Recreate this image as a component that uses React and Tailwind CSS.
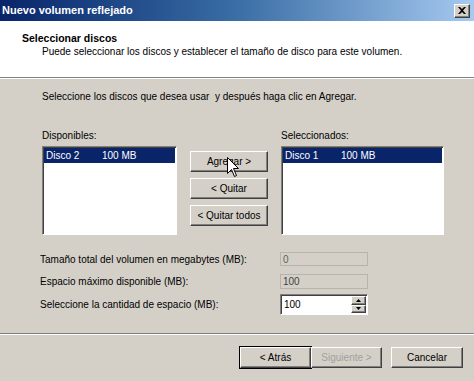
import React from "react";

const raised =
  "bg-[#d4d0c8] border border-t-white border-l-white border-r-[#404040] border-b-[#404040] shadow-[inset_-1px_-1px_0_#808080]";
const sunken =
  "border border-t-[#808080] border-l-[#808080] border-r-white border-b-white shadow-[inset_1px_1px_0_#404040]";

function Btn({ children, className = "", disabled = false, isDefault = false }) {
  return (
    <div
      className={`flex items-center justify-center ${raised} ${className} ${
        disabled ? "text-[#a0a0a0]" : "text-black"
      } ${isDefault ? "outline outline-1 outline-black" : ""}`}
    >
      {children}
    </div>
  );
}

function ListBox({ className = "", label }) {
  return (
    <div className={`bg-white h-[89px] p-[1px] ${sunken} ${className}`}>
      <div className="h-[15px] bg-[#0a246a] text-white flex items-center pl-[2px]">
        <span className="w-[56px]">{label}</span>
        <span>100 MB</span>
      </div>
    </div>
  );
}

export default function App() {
  return (
    <div
      className="relative w-[474px] h-[381px] overflow-hidden bg-[#d4d0c8] flex flex-col text-[10px] leading-[13px] text-black"
      style={{ fontFamily: '"Liberation Sans", Arial, sans-serif' }}
    >
      {/* Title bar */}
      <div className="h-[21px] shrink-0 flex items-center justify-between pl-[2px] pr-[4px] bg-linear-to-r from-[#0a246a] via-[#3a6ea5] to-[#a6caf0]">
        <span className="text-white font-bold text-[11px]">Nuevo volumen reflejado</span>
        <div className={`w-[16px] h-[14px] flex items-center justify-center ${raised}`}>
          <svg width="8" height="7" viewBox="0 0 8 7">
            <path d="M0 0h2l2 2 2-2h2L5 3.5 8 7H6L4 5 2 7H0l3-3.5z" fill="black" />
          </svg>
        </div>
      </div>

      {/* Header */}
      <div className="h-[56px] shrink-0 bg-white pl-[22px] pt-[11px]">
        <div className="font-bold text-[10.5px]">Seleccionar discos</div>
        <div className="pl-[20px] mt-[0px]">
          Puede seleccionar los discos y establecer el tamaño de disco para este volumen.
        </div>
      </div>
      <div className="h-[1px] shrink-0 bg-[#808080]" />
      <div className="h-[1px] shrink-0 bg-white" />

      {/* Body */}
      <div className="flex flex-col pl-[42px] pt-[11px] h-[254px] shrink-0">
        <div>Seleccione los discos que desea usar&nbsp; y después haga clic en Agregar.</div>

        <div className="flex items-start mt-[26px]">
          <div className="w-[135px] flex flex-col gap-[4px]">
            <div>Disponibles:</div>
            <ListBox label="Disco 2" />
          </div>
          <div className="ml-[13px] mt-[22px] w-[78px] flex flex-col gap-[6px]">
            <Btn className="h-[21px]">Agregar &gt;</Btn>
            <Btn className="h-[21px]">&lt; Quitar</Btn>
            <Btn className="h-[21px]">&lt; Quitar todos</Btn>
          </div>
          <div className="ml-[13px] w-[163px] flex flex-col gap-[4px]">
            <div>Seleccionados:</div>
            <ListBox label="Disco 1" />
          </div>
        </div>

        <div className="-ml-[2px] mt-[17px] flex flex-col">
          <div className="flex items-center">
            <div className="w-[240px]">Tamaño total del volumen en megabytes (MB):</div>
            <div className="w-[88px] h-[14px] border border-[#b8b4ac] bg-[#d4d0c8] text-[#606060] pl-[2px] flex items-center">
              0
            </div>
          </div>
          <div className="flex items-center mt-[8px]">
            <div className="w-[240px]">Espacio máximo disponible (MB):</div>
            <div className="w-[88px] h-[15px] border border-[#b8b4ac] bg-[#d4d0c8] text-[#404040] pl-[2px] flex items-center">
              100
            </div>
          </div>
          <div className="flex items-center mt-[5px]">
            <div className="w-[240px]">Seleccione la cantidad de espacio (MB):</div>
            <div className={`w-[88px] h-[21px] bg-white flex ${sunken} p-[1px]`}>
              <div className="flex-1 flex items-center pl-[2px]">100</div>
              <div className="w-[15px] flex flex-col">
                <div className={`flex-1 flex items-center justify-center ${raised}`}>
                  <svg width="5" height="3" viewBox="0 0 5 3">
                    <path d="M2.5 0L5 3H0z" fill="black" />
                  </svg>
                </div>
                <div className={`flex-1 flex items-center justify-center ${raised}`}>
                  <svg width="5" height="3" viewBox="0 0 5 3">
                    <path d="M0 0h5L2.5 3z" fill="black" />
                  </svg>
                </div>
              </div>
            </div>
          </div>
        </div>
      </div>

      {/* Bottom separator */}
      <div className="h-[1px] shrink-0 bg-[#808080]" />
      <div className="h-[1px] shrink-0 bg-white" />

      {/* Footer */}
      <div className="flex justify-end pr-[11px] pt-[12px]">
        <Btn className="w-[71px] h-[21px]" isDefault>
          &lt; Atrás
        </Btn>
        <Btn className="w-[71px] h-[21px]" disabled>
          Siguiente &gt;
        </Btn>
        <Btn className="w-[72px] h-[21px] ml-[9px]">Cancelar</Btn>
      </div>

      {/* Mouse cursor */}
      <svg
        className="absolute left-[227px] top-[157px]"
        width="13"
        height="21"
        viewBox="0 0 13 21"
      >
        <path
          d="M0.5 0.5V16.5L4.5 12.5L7.5 19.5L9.5 18.5L6.5 11.5H11.5Z"
          fill="white"
          stroke="black"
          strokeWidth="1"
          strokeLinejoin="miter"
        />
      </svg>
    </div>
  );
}
